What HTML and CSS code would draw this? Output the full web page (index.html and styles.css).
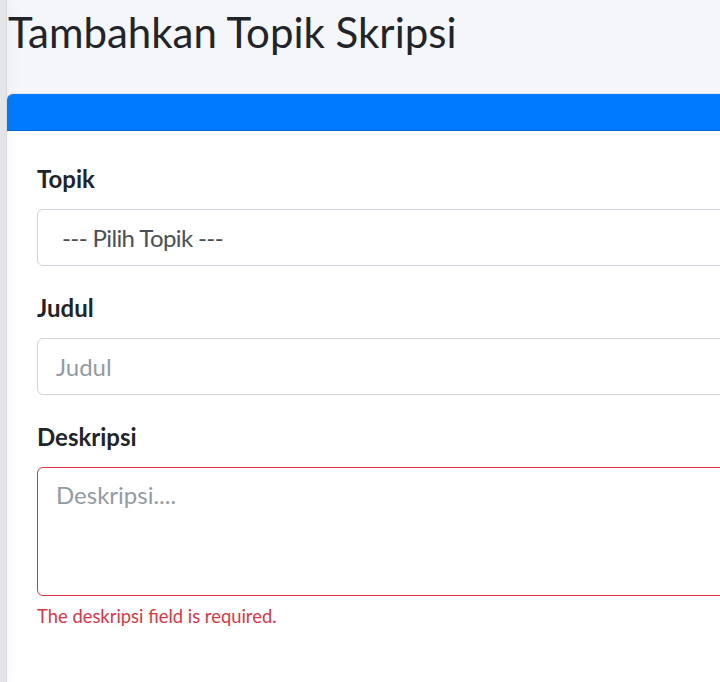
FILE: index.html
```html
<!DOCTYPE html>
<html lang="id">
<head>
<meta charset="utf-8">
<title>Tambahkan Topik Skripsi</title>
<link rel="stylesheet" href="styles.css">
</head>
<body>
<div class="layout">
  <aside class="sidebar"></aside>
  <main class="content">
    <h1 class="page-title">Tambahkan Topik Skripsi</h1>
    <section class="card">
      <div class="card-header"></div>
      <form class="card-body">
        <div class="form-group">
          <label class="form-label" for="topik">Topik</label>
          <select class="form-control select" id="topik">
            <option>--- Pilih Topik ---</option>
          </select>
        </div>
        <div class="form-group">
          <label class="form-label" for="judul">Judul</label>
          <input class="form-control" id="judul" type="text" placeholder="Judul">
        </div>
        <div class="form-group">
          <label class="form-label" for="deskripsi">Deskripsi</label>
          <textarea class="form-control textarea is-invalid" id="deskripsi" placeholder="Deskripsi...."></textarea>
          <div class="invalid-feedback">The deskripsi field is required.</div>
        </div>
      </form>
    </section>
  </main>
</div>
</body>
</html>
```

FILE: styles.css
```css
html, body {
  margin: 0;
  padding: 0;
  height: 100%;
  overflow: hidden;
}
body {
  background: #f4f6f9;
  font-family: "Lato", "Noto Sans", sans-serif;
  color: #212529;
}
.layout {
  display: flex;
  height: 100%;
}
.sidebar {
  flex: 0 0 6px;
  background: #e4e5e9;
  border-right: 1px solid #d9dade;
  position: relative;
  z-index: 2;
  box-shadow: 2px 0 14px rgba(0, 0, 0, 0.06);
}
.content {
  flex: 0 0 1000px;
  min-width: 0;
}
.page-title {
  margin: 0;
  padding: 7px 0 0 1px;
  font-size: 42px;
  font-weight: 400;
  line-height: 51px;
  height: 87px;
  box-sizing: border-box;
  height: 94px;
  color: #212529;
}
.card {
  background: #fff;
  border-radius: 6px 6px 0 0;
  box-shadow: 0 0 2px rgba(0, 0, 0, 0.125), 0 2px 4px rgba(0, 0, 0, 0.2);
}
.card-header {
  height: 36px;
  background: #007bff;
  border-bottom: 1px solid #0069d9;
  border-radius: 6px 6px 0 0;
}
.card-body {
  padding: 30px 30px 60px;
  display: flex;
  flex-direction: column;
  gap: 24px;
}
.form-group {
  display: flex;
  flex-direction: column;
}
.form-label {
  font-size: 24px;
  font-weight: 700;
  line-height: 36px;
  margin-bottom: 12px;
}
.form-control {
  box-sizing: border-box;
  width: 100%;
  height: 57px;
  border: 1.5px solid #ced4da;
  border-radius: 6px;
  background: #fff;
  font-family: inherit;
  font-size: 24px;
  line-height: 36px;
  color: #495057;
  padding: 9px 18px;
  margin: 0;
  outline: none;
}
.form-control::placeholder {
  color: #939ba2;
  opacity: 1;
}
.select {
  appearance: none;
  -webkit-appearance: none;
  padding-left: 24px;
  letter-spacing: -0.6px;
}
.textarea {
  height: 129px;
  resize: none;
  display: block;
}
.is-invalid {
  border-color: #dc3545;
}
.invalid-feedback {
  margin-top: 6px;
  font-size: 18.4px;
  line-height: 28.8px;
  color: #dc3545;
}
```
